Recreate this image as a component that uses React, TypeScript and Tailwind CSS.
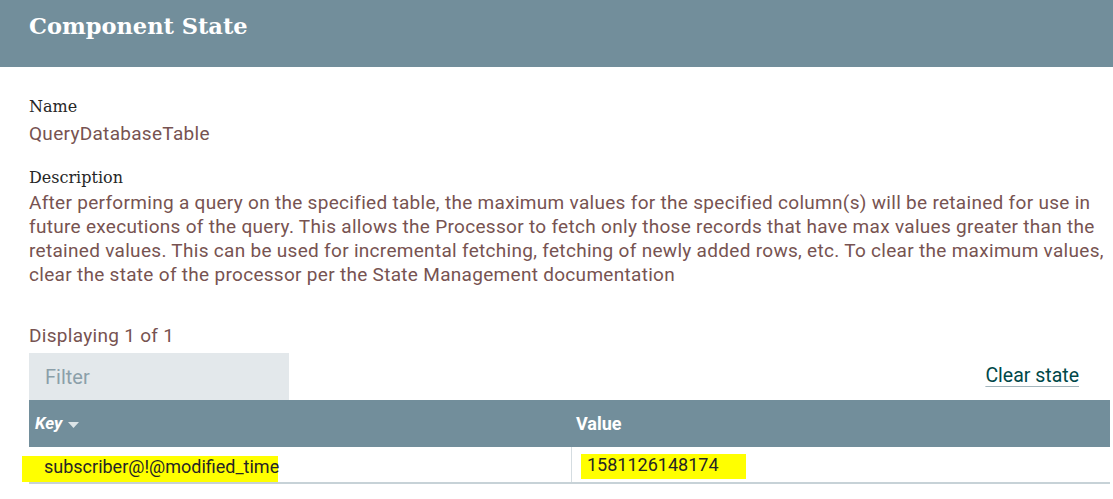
const slab = { fontFamily: "'DejaVu Serif', 'Liberation Serif', serif" };

export default function App() {
  return (
    <div className="w-[1113px] h-[499px] overflow-hidden bg-white" style={{ fontFamily: "Roboto, 'Liberation Sans', sans-serif" }}>
      <div className="h-[67px] bg-[#728e9b] pl-[29px] pt-[8px]">
        <h1 className="text-[22.5px] font-bold text-white leading-[36px]" style={slab}>
          Component State
        </h1>
      </div>

      <div className="pl-[29px] pr-[4px]">
        <div className="pt-[29px]">
          <div className="text-[16px] leading-[22px] text-[#262626]" style={slab}>Name</div>
          <div className="mt-[2px] text-[19px] leading-[28px] tracking-[0.3px] text-[#775351]">QueryDatabaseTable</div>
        </div>

        <div className="pt-[19px]">
          <div className="text-[16px] leading-[22px] text-[#262626]" style={slab}>Description</div>
          <p className="mt-[2px] text-[19px] leading-[24px] tracking-[0.3px] text-[#775351] w-[1080px]">
            After performing a query on the specified table, the maximum values for the specified column(s) will be retained for use in future executions of the query. This allows the Processor to fetch only those records that have max values greater than the retained values. This can be used for incremental fetching, fetching of newly added rows, etc. To clear the maximum values, clear the state of the processor per the State Management documentation
          </p>
        </div>

        <div className="pt-[37px] text-[19px] leading-[24px] tracking-[0.3px] text-[#775351]">Displaying 1 of 1</div>

        <div className="flex items-end justify-between pt-[5px] pr-[30px]">
          <div className="w-[260px] h-[47px] bg-[#e3e8eb] flex items-center pl-[16px] text-[20px] text-[#8b9fa9]">Filter</div>
          <a className="text-[19.5px] leading-[26px] text-[#004849] underline decoration-[#a3b5bc] underline-offset-4 mb-[11px]">Clear state</a>
        </div>

        <div className="w-[1081px]">
          <div className="flex h-[47px] bg-[#728e9b] text-white font-bold">
            <div className="w-[542px] flex items-center pl-[6px] italic gap-[6px] text-[17px]">
              Key
              <svg width="11" height="7" viewBox="0 0 11 7" className="mt-[3px]"><path d="M0 0 L11 0 L5.5 6 Z" fill="#dde5e8" /></svg>
            </div>
            <div className="flex-1 flex items-center pl-[5px] text-[18px]">Value</div>
          </div>
          <div className="flex h-[37px] border-b-2 border-[#c7d2d7] text-[18px] text-[#262626]">
            <div className="w-[542px] pt-[9px]">
              <div className="bg-[#ffff00] -ml-[7px] pl-[22px] w-[256px] h-[26px] leading-[22px]">subscriber@!@modified_time</div>
            </div>
            <div className="flex-1 border-l border-[#d5dde1] pl-[9px] pt-[7px]">
              <div className="bg-[#ffff00] pl-[6px] w-[165px] h-[25px] leading-[22px]">1581126148174</div>
            </div>
          </div>
        </div>
      </div>
    </div>
  );
}
